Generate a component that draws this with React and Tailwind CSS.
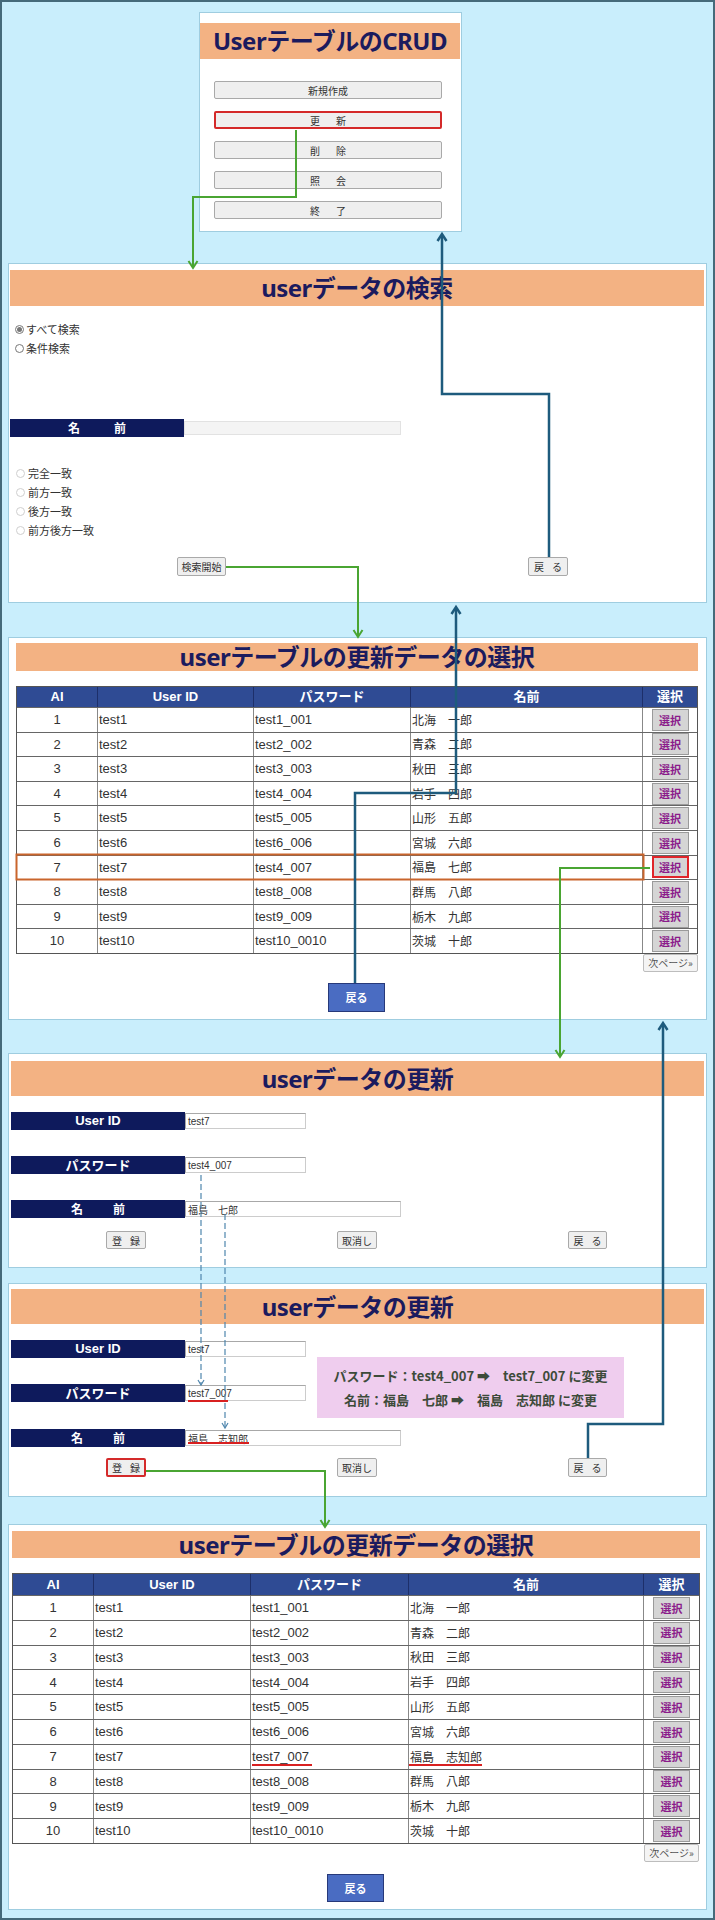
import React from "react";

const TITLE = "font-['Noto_Sans','Noto_Sans_CJK_JP',sans-serif] font-bold text-[#1b1b5e] tracking-[-0.5px]";
const SANS = "font-['Liberation_Sans','Noto_Sans_CJK_JP',sans-serif]";
const JP = "font-['Noto_Sans_CJK_JP','Noto_Sans',sans-serif]";

const names = ["北海　一郎", "青森　二郎", "秋田　三郎", "岩手　四郎", "山形　五郎", "宮城　六郎", "福島　七郎", "群馬　八郎", "栃木　九郎", "茨城　十郎"];
const pw = ["test1_001", "test2_002", "test3_003", "test4_004", "test5_005", "test6_006", "test4_007", "test8_008", "test9_009", "test10_0010"];

function rowsFor(updated) {
  return names.map((n, i) => [
    i + 1,
    `test${i + 1}`,
    updated && i === 6 ? "test7_007" : pw[i],
    updated && i === 6 ? "福島　志知郎" : n,
  ]);
}

function Btn({ children, className = "" }) {
  return (
    <div className={`flex items-center justify-center bg-[#efefef] border border-[#a9a9a9] rounded-[2px] text-[10px] text-[#333] ${JP} ${className}`}>
      {children}
    </div>
  );
}

function SelBtn({ red }) {
  return (
    <div
      className={`w-[37px] h-[22px] bg-[#d5d5d5] flex items-center justify-center text-[11px] font-bold text-[#8b1c8b] ${JP} ${
        red ? "border-2 border-[#e0252a]" : "border border-[#9a9a9a]"
      }`}
    >
      選択
    </div>
  );
}

function DataTable({ cols, headH, rowH, rows, redRow }) {
  const heads = ["AI", "User ID", "パスワード", "名前"];
  return (
    <div className={`border border-[#555] bg-white ${SANS} text-[#333]`}>
      <div className={`flex ${headH} bg-[#2f4b94] text-white font-bold text-[13px]`}>
        {heads.map((h, i) => (
          <div key={h} className={`${cols[i]} shrink-0 border-r border-[#1d2f6a] flex items-center justify-center`}>
            {h}
          </div>
        ))}
        <div className="flex-1 flex items-center justify-center">選択</div>
      </div>
      {rows.map((r, i) => (
        <div key={i} className={`flex ${rowH} border-t border-[#666] text-[13px]`}>
          <div className={`${cols[0]} shrink-0 border-r border-[#888] flex items-center justify-center`}>{r[0]}</div>
          <div className={`${cols[1]} shrink-0 border-r border-[#888] flex items-center pl-[1px]`}>{r[1]}</div>
          <div className={`${cols[2]} shrink-0 border-r border-[#888] flex items-center pl-[1px]`}>{r[2]}</div>
          <div className={`${cols[3]} shrink-0 border-r border-[#888] flex items-center pl-[1px] text-[12px] ${JP}`}>{r[3]}</div>
          <div className="flex-1 flex items-center justify-center">
            <SelBtn red={redRow === i} />
          </div>
        </div>
      ))}
    </div>
  );
}

function Label({ children, wide }) {
  return (
    <div className={`w-[174px] h-[18px] shrink-0 bg-[#0e1a5c] text-white font-bold text-[13px] flex items-center justify-center ${SANS}`}>
      {children}
    </div>
  );
}

function NameLabelText({ gap }) {
  return (
    <div className={`flex ${gap} text-[12px] ${JP}`}>
      <span>名</span>
      <span>前</span>
    </div>
  );
}

function Input({ className = "", children }) {
  return (
    <div className={`h-[16px] bg-white border border-[#a8a8a8] border-b-[#ccc] border-r-[#ccc] text-[10px] text-[#333] pl-[2px] flex items-center ${SANS} ${className}`}>
      {children}
    </div>
  );
}

function Radio({ state }) {
  if (state === "on")
    return (
      <span className="w-[9px] h-[9px] rounded-full border border-[#777] bg-white flex items-center justify-center">
        <span className="w-[5px] h-[5px] rounded-full bg-[#777]" />
      </span>
    );
  if (state === "off") return <span className="w-[9px] h-[9px] rounded-full border border-[#777] bg-white" />;
  return <span className="w-[9px] h-[9px] rounded-full border border-[#cfcfcf] bg-white" />;
}

function CrudPanel() {
  const labels = [
    ["新規作成"],
    ["更", "新"],
    ["削", "除"],
    ["照", "会"],
    ["終", "了"],
  ];
  return (
    <div className="ml-[197px] mt-[10px] w-[263px] h-[220px] shrink-0 bg-white border border-[#9fcde0] flex flex-col">
      <div className={`mt-[10px] w-[260px] h-[36px] bg-[#f3b283] flex items-center justify-center text-[24px] ${TITLE}`}>
        UserテーブルのCRUD
      </div>
      <div className="mt-[22px] ml-[14px] w-[228px] flex flex-col gap-[12px]">
        {labels.map((l, i) => (
          <div
            key={i}
            className={`h-[18px] flex items-center justify-center gap-[16px] bg-[#efefef] rounded-[2px] text-[10px] text-[#333] ${JP} ${
              i === 1 ? "border-2 border-[#d42a2a]" : "border border-[#a9a9a9]"
            }`}
          >
            {l.map((c) => (
              <span key={c}>{c}</span>
            ))}
          </div>
        ))}
      </div>
    </div>
  );
}

function SearchPanel() {
  return (
    <div className="ml-[6px] mt-[31px] w-[699px] h-[340px] shrink-0 bg-white border border-[#9fcde0] flex flex-col">
      <div className={`mt-[6px] ml-[1px] w-[694px] h-[36px] bg-[#f3b283] flex items-center justify-center text-[24px] ${TITLE}`}>
        userデータの検索
      </div>
      <div className={`mt-[14px] flex flex-col text-[11px] text-[#333] ${JP}`}>
        <div className="h-[19px] flex items-center gap-[2px] pl-[6px]">
          <Radio state="on" />
          <span>すべて検索</span>
        </div>
        <div className="h-[19px] flex items-center gap-[2px] pl-[6px]">
          <Radio state="off" />
          <span>条件検索</span>
        </div>
      </div>
      <div className="mt-[61px] ml-[1px] flex items-center">
        <div className="w-[174px] h-[18px] bg-[#0e1a5c] text-white font-bold flex items-center justify-center">
          <NameLabelText gap="gap-[34px]" />
        </div>
        <div className="w-[217px] h-[14px] bg-[#f4f4f4] border border-[#e2e2e2]" />
      </div>
      <div className={`mt-[27px] flex flex-col text-[11px] text-[#333] ${JP}`}>
        {["完全一致", "前方一致", "後方一致", "前方後方一致"].map((t) => (
          <div key={t} className="h-[19px] flex items-center gap-[3px] pl-[7px]">
            <Radio state="dis" />
            <span>{t}</span>
          </div>
        ))}
      </div>
      <div className="mt-[17px] flex">
        <Btn className="ml-[168px] w-[49px] h-[19px]">検索開始</Btn>
        <Btn className="ml-[302px] w-[40px] h-[19px] gap-[8px]">
          <span>戻</span>
          <span>る</span>
        </Btn>
      </div>
    </div>
  );
}

function TablePanel({ updated }) {
  const cols = updated
    ? ["w-[81px]", "w-[157px]", "w-[158px]", "w-[235px]"]
    : ["w-[81px]", "w-[156px]", "w-[157px]", "w-[232px]"];
  return (
    <div
      className={`ml-[6px] w-[699px] shrink-0 bg-white border border-[#9fcde0] flex flex-col ${
        updated ? "mt-[27px] h-[386px]" : "mt-[34px] h-[383px]"
      }`}
    >
      <div
        className={`bg-[#f3b283] flex items-center justify-center text-[24px] ${TITLE} ${
          updated ? "mt-[6px] ml-[3px] w-[688px] h-[27px]" : "mt-[5px] ml-[7px] w-[682px] h-[28px]"
        }`}
      >
        userテーブルの更新データの選択
      </div>
      <div className={`mt-[15px] ${updated ? "ml-[3px] w-[688px]" : "ml-[7px] w-[682px]"}`}>
        <DataTable
          cols={cols}
          headH={updated ? "h-[21px]" : "h-[20px]"}
          rowH={updated ? "h-[24.8px]" : "h-[24.6px]"}
          rows={rowsFor(updated)}
          redRow={updated ? -1 : 6}
        />
      </div>
      <div className="flex">
        <div
          className={`h-[18px] w-[55px] bg-[#f4f4f4] border border-[#bdbdbd] rounded-[2px] flex items-center justify-center text-[10px] text-[#555] ${JP} ${
            updated ? "ml-[635px]" : "ml-[634px]"
          }`}
        >
          次ページ»
        </div>
      </div>
      <div
        className={`w-[57px] bg-[#4a6cc2] border border-[#27397a] flex items-center justify-center text-white font-bold text-[11px] ${JP} ${
          updated ? "mt-[12px] ml-[318px] h-[28px]" : "mt-[11px] ml-[319px] h-[29px]"
        }`}
      >
        戻る
      </div>
    </div>
  );
}

function UpdatePanel({ second }) {
  return (
    <div
      className={`relative ml-[6px] w-[699px] shrink-0 bg-white border border-[#9fcde0] flex flex-col ${
        second ? "mt-[15px] h-[214px]" : "mt-[33px] h-[215px]"
      }`}
    >
      <div
        className={`ml-[2px] w-[693px] h-[35px] bg-[#f3b283] flex items-center justify-center text-[24px] ${TITLE} ${
          second ? "mt-[5px]" : "mt-[7px]"
        }`}
      >
        userデータの更新
      </div>
      <div className="mt-[16px] ml-[2px] flex items-center">
        <Label>User ID</Label>
        <Input className="w-[121px]">test7</Input>
      </div>
      <div className="mt-[26px] ml-[2px] flex items-center">
        <Label>
          <span className={JP}>パスワード</span>
        </Label>
        <Input className="w-[121px]">{second ? "test7_007" : "test4_007"}</Input>
      </div>
      <div className={`${second ? "mt-[27px]" : "mt-[26px]"} ml-[2px] flex items-center`}>
        <div className="w-[174px] h-[18px] bg-[#0e1a5c] text-white font-bold flex items-center justify-center">
          <NameLabelText gap="gap-[30px]" />
        </div>
        <Input className={`w-[216px] ${JP}`}>{second ? "福島　志知郎" : "福島　七郎"}</Input>
      </div>
      <div className={`${second ? "mt-[11px] h-[19px]" : "mt-[13px] h-[18px]"} flex`}>
        <Btn className={`ml-[97px] w-[40px] h-full gap-[8px] ${second ? "border-2 border-[#d42a2a]" : ""}`}>
          <span>登</span>
          <span>録</span>
        </Btn>
        <Btn className="ml-[191px] w-[40px] h-full">取消し</Btn>
        <Btn className="ml-[191px] w-[39px] h-full gap-[8px]">
          <span>戻</span>
          <span>る</span>
        </Btn>
      </div>
      {second && (
        <div
          className={`absolute left-[308px] top-[73px] w-[307px] h-[61px] bg-[#efcdee] flex flex-col items-center justify-center gap-[4px] text-[13px] font-bold text-[#3d4b3a] ${JP}`}
        >
          <div>パスワード：test4_007 ➡　test7_007 に変更</div>
          <div>名前：福島　七郎 ➡　福島　志知郎 に変更</div>
        </div>
      )}
    </div>
  );
}

function Overlay() {
  const G = "#4aa532";
  const B = "#1e5b7d";
  const D = "#4f86ad";
  const R = "#d82020";
  const down = (x, y, c, s = 4.5) => (
    <polyline points={`${x - s},${y - 7} ${x},${y} ${x + s},${y - 7}`} fill="none" stroke={c} strokeWidth="2" />
  );
  const up = (x, y, c) => (
    <polyline points={`${x - 4.5},${y + 7} ${x},${y} ${x + 4.5},${y + 7}`} fill="none" stroke={c} strokeWidth="2.5" />
  );
  return (
    <svg className="absolute left-0 top-0 pointer-events-none" width="715" height="1920" viewBox="0 0 715 1920">
      {/* orange row highlight */}
      <rect x="16.5" y="854.5" width="627" height="25" fill="none" stroke="#c9652c" strokeWidth="2" />
      {/* green flow */}
      <path d="M296 130 V197 H193 V267" fill="none" stroke={G} strokeWidth="2" />
      {down(193, 268, G)}
      <path d="M226 567 H358 V636" fill="none" stroke={G} strokeWidth="2" />
      {down(358, 637, G)}
      <path d="M650 868 H560 V1056" fill="none" stroke={G} strokeWidth="2" />
      {down(560, 1057, G)}
      <path d="M146 1471 H325 V1526" fill="none" stroke={G} strokeWidth="2" />
      {down(325, 1527, G)}
      {/* blue back flow */}
      <path d="M549 557 V394 H442 V235" fill="none" stroke={B} strokeWidth="2.5" />
      {up(442, 234, B)}
      <path d="M355 983 V793 H456 V608" fill="none" stroke={B} strokeWidth="2.5" />
      {up(456, 607, B)}
      <path d="M588 1458 V1424 H663 V1024" fill="none" stroke={B} strokeWidth="2.5" />
      {up(663, 1023, B)}
      {/* dashed */}
      <path d="M201 1175 V1384" fill="none" stroke={D} strokeWidth="1.2" strokeDasharray="6 3" />
      <polyline points="198,1380 201,1385 204,1380" fill="none" stroke={D} strokeWidth="1.2" />
      <path d="M225 1214 V1427" fill="none" stroke={D} strokeWidth="1.2" strokeDasharray="6 3" />
      <polyline points="222,1423 225,1428 228,1423" fill="none" stroke={D} strokeWidth="1.2" />
      {/* red underlines */}
      <line x1="188" y1="1401" x2="228" y2="1401" stroke={R} strokeWidth="2" />
      <line x1="188" y1="1443" x2="249" y2="1443" stroke={R} strokeWidth="2" />
      <line x1="252" y1="1765" x2="312" y2="1765" stroke={R} strokeWidth="2" />
      <line x1="409" y1="1765" x2="482" y2="1765" stroke={R} strokeWidth="2" />
    </svg>
  );
}

export default function App() {
  return (
    <div className="relative w-[715px] h-[1920px] overflow-hidden">
      <div className="w-full h-full border-2 border-[#456a7a] bg-[#c9eefc] flex flex-col">
        <CrudPanel />
        <SearchPanel />
        <TablePanel />
        <UpdatePanel />
        <UpdatePanel second />
        <TablePanel updated />
      </div>
      <Overlay />
    </div>
  );
}
